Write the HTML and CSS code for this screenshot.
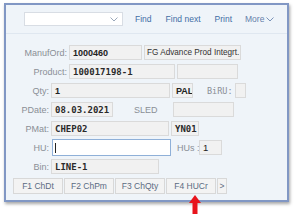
FILE: index.html
```html
<!DOCTYPE html>
<html>
<head>
<meta charset="utf-8">
<link rel="stylesheet" href="styles.css">
</head>
<body>
<div class="frame">
  <div class="toolbar">
    <div class="select"><svg class="chev" width="8" height="5" viewBox="0 0 8 5"><path d="M0.5 0.5 L4 4 L7.5 0.5" fill="none" stroke="#9aa8ba" stroke-width="1"/></svg></div>
    <a class="tlink first">Find</a>
    <a class="tlink">Find next</a>
    <a class="tlink">Print</a>
    <a class="tlink more">More <svg width="8" height="5" viewBox="0 0 8 5"><path d="M0.5 0.5 L4 4 L7.5 0.5" fill="none" stroke="#7a93b8" stroke-width="1"/></svg></a>
  </div>
  <div class="form">
    <div class="row">
      <span class="lbl long">ManufOrd:</span>
      <span class="fld sans w73">1000460</span>
      <span class="fld plain w97">FG Advance Prod Integrt.</span>
    </div>
    <div class="row">
      <span class="lbl long">Product:</span>
      <span class="fld mono w106">100017198-1</span>
      <span class="fld w61"></span>
    </div>
    <div class="row">
      <span class="lbl">Qty:</span>
      <span class="fld sans w119">1</span>
      <span class="fld sans w21">PAL</span>
      <span class="lbl2 mono-l biru">BiRU:</span>
      <span class="fld w11"></span>
    </div>
    <div class="row">
      <span class="lbl">PDate:</span>
      <span class="fld mono w62">08.03.2021</span>
      <span class="lbl2 sled">SLED</span>
      <span class="fld w61"></span>
    </div>
    <div class="row">
      <span class="lbl">PMat:</span>
      <span class="fld mono w118">CHEP02</span>
      <span class="fld mono w28">YN01</span>
    </div>
    <div class="row">
      <span class="lbl hu">HU:</span>
      <span class="input w119"><span class="caret"></span></span>
      <span class="lbl2 hus">HUs :</span>
      <span class="fld sans-r w23">1</span>
    </div>
    <div class="row">
      <span class="lbl">Bin:</span>
      <span class="fld mono w108">LINE-1</span>
    </div>
    <div class="buttons">
      <span class="btn">F1 ChDt</span>
      <span class="btn">F2 ChPm</span>
      <span class="btn">F3 ChQty</span>
      <span class="btn">F4 HUCr</span>
      <span class="btn small">&gt;</span>
    </div>
  </div>
</div>
<svg class="arrow" width="12" height="19" viewBox="0 0 12 19"><path d="M6 0 L12 8 L8.5 8 L8.5 19 L3.5 19 L3.5 8 L0 8 Z" fill="#e8141c"/></svg>
</body>
</html>
```
FILE: styles.css
```css
html, body {
  margin: 0;
  padding: 0;
  background: #ffffff;
}
body {
  position: relative;
  width: 300px;
  height: 214px;
  overflow: hidden;
  font-family: "Liberation Sans", Arial, sans-serif;
}
.frame {
  margin: 3px 0 0 4px;
  width: 285px;
  height: 199px;
  box-sizing: border-box;
  border: 2px solid #8197c4;
  background: #eff4f9;
  box-shadow: 1px 2px 3px rgba(0, 0, 0, 0.35);
  display: flex;
  flex-direction: column;
}
.toolbar {
  height: 28px;
  border-bottom: 1px solid #dfe7f0;
  display: flex;
  align-items: center;
  padding-left: 18px;
  font-size: 8.5px;
}
.select {
  width: 99px;
  height: 14px;
  box-sizing: border-box;
  background: #ffffff;
  border: 1px solid #d8dde4;
  display: flex;
  align-items: center;
  justify-content: flex-end;
  padding-right: 4px;
}
.tlink {
  color: #3f6ea6;
  margin-left: 14px;
  white-space: nowrap;
}
.tlink.first {
  margin-left: 12px;
}
.tlink.more {
  color: #6580aa;
  margin-left: 13px;
  display: flex;
  align-items: center;
  gap: 2px;
}
.form {
  padding: 11px 0 0 7px;
  display: flex;
  flex-direction: column;
  gap: 4px;
}
.row {
  display: flex;
  align-items: center;
  height: 15px;
}
.lbl {
  width: 36px;
  margin-right: 2px;
  text-align: right;
  font-size: 9px;
  color: #8a8f96;
  white-space: nowrap;
}
.lbl.long {
  width: 54px;
}
.lbl.hu {
  margin-right: 3px;
}
.lbl2 {
  font-size: 9px;
  color: #8a8f96;
  white-space: nowrap;
}
.mono-l {
  font-family: "DejaVu Sans Mono", monospace;
  font-size: 8.5px;
}
.biru {
  margin-left: 12px;
  margin-right: 1px;
  width: 27px;
}
.sled {
  margin-left: 19px;
  width: 39px;
}
.hus {
  margin-left: 6px;
  width: 22px;
}
.fld {
  height: 15px;
  box-sizing: border-box;
  background: #f1f1f1;
  border: 1px solid #dadada;
  margin-right: 2px;
  padding-left: 3px;
  display: flex;
  align-items: center;
  color: #222;
  white-space: nowrap;
  overflow: hidden;
}
.sans {
  font-size: 9px;
  font-weight: bold;
}
.sans-r {
  font-size: 9.5px;
}
.plain {
  font-size: 8.2px;
  color: #333;
  padding-left: 2px;
}
.mono {
  font-family: "DejaVu Sans Mono", monospace;
  font-size: 9px;
  font-weight: bold;
  color: #2a2a2a;
}
.input {
  height: 17px;
  box-sizing: border-box;
  background: #ffffff;
  border: 1px solid #8fb0d8;
  display: flex;
  align-items: center;
  padding-left: 2px;
}
.caret {
  width: 1px;
  height: 10px;
  background: #222;
}
.w11 { width: 11px; }
.w21 { width: 21px; }
.w23 { width: 23px; }
.w28 { width: 28px; }
.w61 { width: 61px; }
.w62 { width: 62px; }
.w73 { width: 73px; }
.w97 { width: 97px; }
.w106 { width: 106px; }
.w108 { width: 108px; }
.w118 { width: 118px; }
.w119 { width: 119px; }
.buttons {
  display: flex;
  gap: 1px;
  height: 16px;
}
.btn {
  width: 50px;
  box-sizing: border-box;
  background: #f3f3f3;
  border: 1px solid #d8d8d8;
  display: flex;
  align-items: center;
  justify-content: center;
  font-size: 8.5px;
  color: #5b6b82;
  white-space: nowrap;
}
.btn.small {
  width: 10px;
}
.arrow {
  position: absolute;
  left: 189px;
  top: 195px;
}
```
